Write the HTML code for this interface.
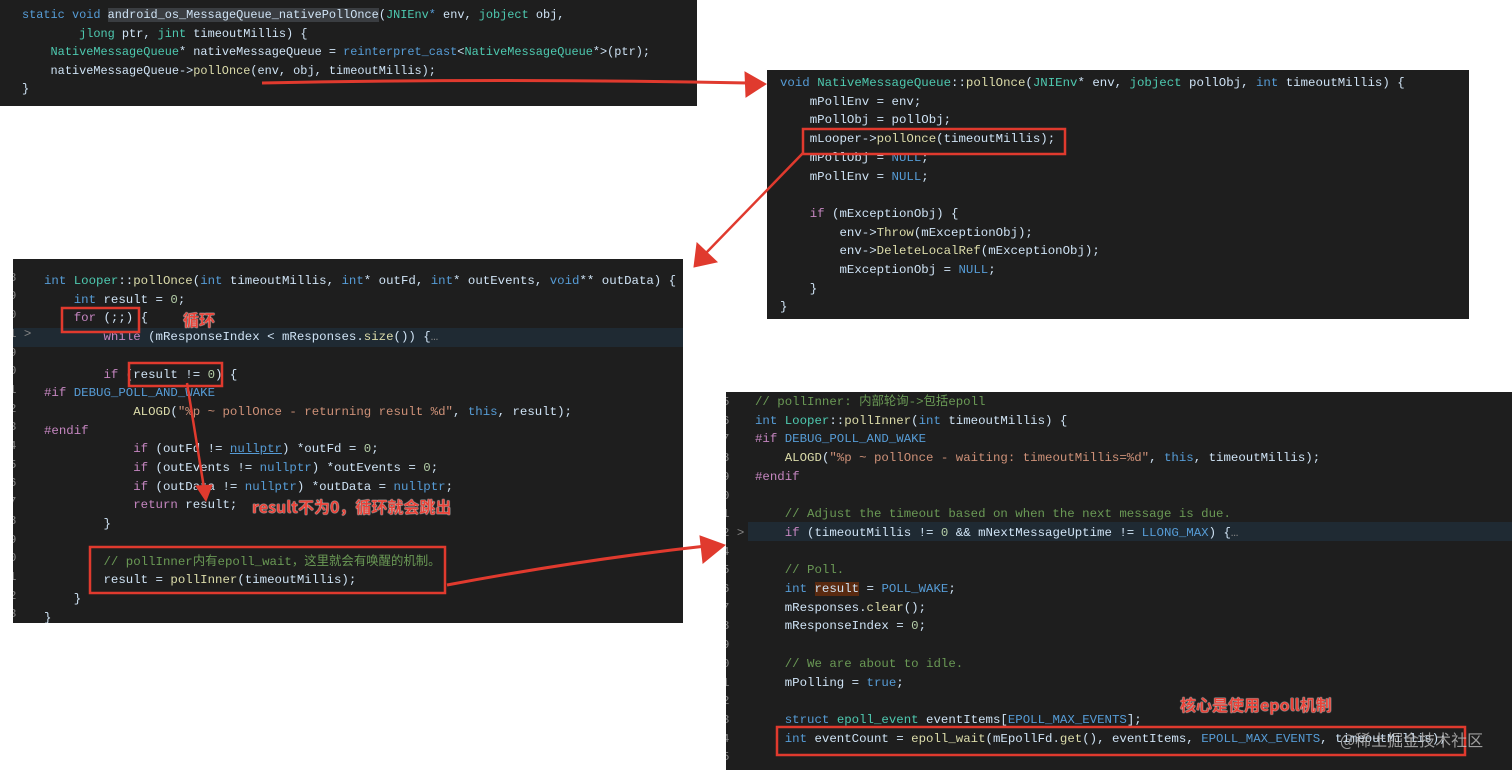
<!DOCTYPE html>
<html><head><meta charset="utf-8">
<style>
html,body{margin:0;padding:0;background:#fff;width:1512px;height:770px;overflow:hidden;position:relative}
.p{position:absolute;background:#1e1e1e;overflow:hidden}
.c{position:absolute;margin:0;font-family:"Liberation Mono","Noto Sans CJK SC",monospace;white-space:pre;color:#cfe3f5}
.k{color:#569cd6}.t{color:#4ec9b0}.f{color:#dcdcaa}.cm{color:#6a9955}.s{color:#ce9178}.pp{color:#c586c0}.n{color:#b5cea8}.g{color:#858585}.d{color:#9b9b9b}
.ln{position:absolute;font-family:"Liberation Mono",monospace;color:#858585;white-space:pre;margin:0}
.hl{position:absolute;background:#1f2a33}
.lab{position:absolute;font-family:"Noto Sans CJK SC","Liberation Sans",sans-serif;font-weight:bold;color:#e8443a;font-size:16px;white-space:nowrap;text-shadow:0 0 1px #fff,0 0 1px #fff}
</style></head><body>

<div class="p" style="left:0;top:0;width:697px;height:106px">
<pre class="c" style="left:22px;top:6px;font-size:11.9px;line-height:18.6px"><span class="k">static</span> <span class="k">void</span> <span style="background:#3a3d41">android_os_MessageQueue_nativePollOnce</span>(<span class="t">JNIEnv</span><span class="k">*</span> env, <span class="t">jobject</span> obj,
        <span class="t">jlong</span> ptr, <span class="t">jint</span> timeoutMillis) {
    <span class="t">NativeMessageQueue</span>* nativeMessageQueue = <span class="k">reinterpret_cast</span>&lt;<span class="t">NativeMessageQueue</span>*&gt;(ptr);
    nativeMessageQueue-&gt;<span class="f">pollOnce</span>(env, obj, timeoutMillis);
}</pre>
</div>

<div class="p" style="left:767px;top:70px;width:702px;height:249px">
<pre class="c" style="left:13px;top:4px;font-size:12.4px;line-height:18.7px"><span class="k">void</span> <span class="t">NativeMessageQueue</span>::<span class="f">pollOnce</span>(<span class="t">JNIEnv</span>* env, <span class="t">jobject</span> pollObj, <span class="k">int</span> timeoutMillis) {
    mPollEnv = env;
    mPollObj = pollObj;
    mLooper-&gt;<span class="f">pollOnce</span>(timeoutMillis);
    mPollObj = <span class="k">NULL</span>;
    mPollEnv = <span class="k">NULL</span>;

    <span class="pp">if</span> (mExceptionObj) {
        env-&gt;<span class="f">Throw</span>(mExceptionObj);
        env-&gt;<span class="f">DeleteLocalRef</span>(mExceptionObj);
        mExceptionObj = <span class="k">NULL</span>;
    }
}</pre>
</div>

<div class="p" style="left:13px;top:259px;width:670px;height:364px">
<div class="hl" style="left:0;top:69px;width:670px;height:19px"></div>
<pre class="ln" style="left:-4px;top:-9px;font-size:12.4px;line-height:18.7px">7
8
9
0
1 &gt;
9
0
1
2
3
4
5
6
7
8
9
0
1
2
3</pre>
<pre class="c" style="left:31px;top:13px;font-size:12.4px;line-height:18.7px"><span class="k">int</span> <span class="t">Looper</span>::<span class="f">pollOnce</span>(<span class="k">int</span> timeoutMillis, <span class="k">int</span>* outFd, <span class="k">int</span>* outEvents, <span class="k">void</span>** outData) {
    <span class="k">int</span> result = <span class="n">0</span>;
    <span class="pp">for</span> (;;) {
        <span class="pp">while</span> (mResponseIndex &lt; mResponses.<span class="f">size</span>()) {<span class="g">…</span>

        <span class="pp">if</span> (result != <span class="n">0</span>) {
<span class="pp">#if</span> <span class="k">DEBUG_POLL_AND_WAKE</span>
            <span class="f">ALOGD</span>(<span class="s">"%p ~ pollOnce - returning result %d"</span>, <span class="k">this</span>, result);
<span class="pp">#endif</span>
            <span class="pp">if</span> (outFd != <span class="k" style="text-decoration:underline">nullptr</span>) *outFd = <span class="n">0</span>;
            <span class="pp">if</span> (outEvents != <span class="k">nullptr</span>) *outEvents = <span class="n">0</span>;
            <span class="pp">if</span> (outData != <span class="k">nullptr</span>) *outData = <span class="k">nullptr</span>;
            <span class="pp">return</span> result;
        }

        <span class="cm">// pollInner内有epoll_wait，这里就会有唤醒的机制。</span>
        result = <span class="f">pollInner</span>(timeoutMillis);
    }
}</pre>
</div>

<div class="p" style="left:726px;top:392px;width:786px;height:378px">
<div class="hl" style="left:22px;top:130px;width:764px;height:19px"></div>
<pre class="ln" style="left:-4px;top:1px;font-size:12.4px;line-height:18.7px">5
6
7
8
9
0
1
2 &gt;
4
5
6
7
8
9
0
1
2
3
4
5</pre>
<pre class="c" style="left:29px;top:1px;font-size:12.4px;line-height:18.7px"><span class="cm">// pollInner: 内部轮询-&gt;包括epoll</span>
<span class="k">int</span> <span class="t">Looper</span>::<span class="f">pollInner</span>(<span class="k">int</span> timeoutMillis) {
<span class="pp">#if</span> <span class="k">DEBUG_POLL_AND_WAKE</span>
    <span class="f">ALOGD</span>(<span class="s">"%p ~ pollOnce - waiting: timeoutMillis=%d"</span>, <span class="k">this</span>, timeoutMillis);
<span class="pp">#endif</span>

    <span class="cm">// Adjust the timeout based on when the next message is due.</span>
    <span class="pp">if</span> (timeoutMillis != <span class="n">0</span> &amp;&amp; mNextMessageUptime != <span class="k">LLONG_MAX</span>) {<span class="g">…</span>

    <span class="cm">// Poll.</span>
    <span class="k">int</span> <span style="background:#5a2a10">result</span> = <span class="k">POLL_WAKE</span>;
    mResponses.<span class="f">clear</span>();
    mResponseIndex = <span class="n">0</span>;

    <span class="cm">// We are about to idle.</span>
    mPolling = <span class="k">true</span>;

    <span class="k">struct</span> <span class="t">epoll_event</span> eventItems[<span class="k">EPOLL_MAX_EVENTS</span>];
    <span class="k">int</span> eventCount = <span class="f">epoll_wait</span>(mEpollFd.<span class="f">get</span>(), eventItems, <span class="k">EPOLL_MAX_EVENTS</span>, timeoutMillis);</pre>
</div>

<svg width="1512" height="770" style="position:absolute;left:0;top:0" xmlns="http://www.w3.org/2000/svg">
<g fill="none" stroke="#e03a2e" stroke-width="2.5">
<rect x="803" y="129" width="262" height="25"/>
<rect x="62" y="308" width="77" height="24"/>
<rect x="129" y="363" width="93" height="23"/>
<rect x="90" y="547" width="355" height="46"/>
<rect x="777" y="727" width="688" height="28"/>
</g>
<g stroke="#e03a2e" fill="#e03a2e">
<path d="M262 83 Q500 78 748 83" stroke-width="3" fill="none"/>
<path d="M745 72 L766 84 L746 97 Z"/>
<path d="M803 153 L706 253" stroke-width="2.5" fill="none"/>
<path d="M697 243 L717 262 L694 267 Z"/>
<path d="M187 383 L204 488" stroke-width="2.5" fill="none"/>
<path d="M196 486 L212 485 L206 501 Z"/>
<path d="M447 585 Q580 560 706 546" stroke-width="3" fill="none"/>
<path d="M700 536 L725 545 L703 563 Z"/>
</g>
</svg>

<div class="lab" style="left:183px;top:307px">循环</div>
<div class="lab" style="left:252px;top:494px">result不为0，循环就会跳出</div>
<div class="lab" style="left:1180px;top:692px">核心是使用epoll机制</div>
<div style="position:absolute;left:1340px;top:727px;font-family:'Noto Sans CJK SC',sans-serif;font-size:16px;color:rgba(200,200,200,0.75);white-space:nowrap">@稀土掘金技术社区</div>
</body></html>
